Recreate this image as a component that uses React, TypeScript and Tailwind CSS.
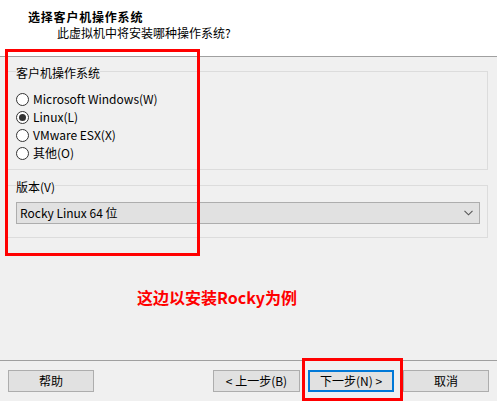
const options = [
  { label: 'Microsoft Windows(W)', checked: false },
  { label: 'Linux(L)', checked: true },
  { label: 'VMware ESX(X)', checked: false },
  { label: '其他(O)', checked: false },
]

function Radio({ checked }: { checked: boolean }) {
  return (
    <span className="w-[13px] h-[13px] rounded-full border border-[#333333] bg-white flex items-center justify-center shrink-0">
      {checked && <span className="w-[7px] h-[7px] rounded-full bg-[#333333]" />}
    </span>
  )
}

export default function App() {
  return (
    <div
      className="relative w-[497px] h-[401px] bg-[#f0f0f0] text-black text-[12px] flex flex-col overflow-hidden"
      style={{ fontFamily: '"Noto Sans CJK SC", "Noto Sans", sans-serif' }}
    >
      {/* Header */}
      <div className="h-[57px] bg-white border-b border-[#a0a0a0] shrink-0">
        <div className="pl-[28px] pt-[9px] leading-[16px] font-bold tracking-[0.8px]">选择客户机操作系统</div>
        <div className="pl-[57px] leading-[16px]">此虚拟机中将安装哪种操作系统?</div>
      </div>

      <div className="pl-[7px] pr-[9px]">
        {/* Guest OS group */}
        <fieldset className="mt-[4px] border border-[#dcdcdc] pl-[8px] pr-[7px] pt-[9px] pb-[7px]">
          <legend className="pt-[4px] leading-[16px]">客户机操作系统</legend>
          {options.map((o) => (
            <div key={o.label} className="h-[18px] flex items-center gap-[4px]">
              <Radio checked={o.checked} />
              <span className="leading-[16px]">{o.label}</span>
            </div>
          ))}
        </fieldset>

        {/* Version group */}
        <fieldset className="mt-[5px] border border-[#dcdcdc] pl-[8px] pr-[7px] pt-[7px] pb-[13px]">
          <legend className="pt-[4px] leading-[16px]">版本(V)</legend>
          <div className="h-[22px] bg-[#e1e1e1] border border-[#adadad] flex items-center pl-[3px] pr-[5px]">
            <span className="flex-1 leading-[16px]">Rocky Linux 64 位</span>
            <svg width="9" height="6" viewBox="0 0 9 6" className="mr-[1px]">
              <path d="M0.5 0.8 L4.5 4.8 L8.5 0.8" fill="none" stroke="#555555" strokeWidth="1.1" />
            </svg>
          </div>
        </fieldset>
      </div>

      {/* Annotation text */}
      <div className="pl-[137px] pt-[49px] text-[16px] font-bold text-[#ff0000] leading-[20px]">
        这边以安装Rocky为例
      </div>

      {/* Footer */}
      <div className="mt-auto border-t border-[#a0a0a0] h-[41px] pt-[9px] px-[8px] flex">
        <button className="w-[86px] h-[22px] bg-[#e1e1e1] border border-[#adadad] leading-[16px]">帮助</button>
        <div className="ml-auto flex">
          <button className="w-[87px] h-[22px] bg-[#e1e1e1] border border-[#adadad] leading-[16px]">&lt; 上一步(B)</button>
          <button className="ml-[8px] w-[86px] h-[22px] bg-[#e1e1e1] border-2 border-[#0078d7] leading-[16px]">下一步(N) &gt;</button>
          <button className="ml-[9px] w-[86px] h-[22px] bg-[#e1e1e1] border border-[#adadad] leading-[16px]">取消</button>
        </div>
      </div>

      {/* Red annotation boxes */}
      <div className="absolute left-[5px] top-[49px] w-[195px] h-[207px] border-[3px] border-[#ff0000] pointer-events-none" />
      <div className="absolute left-[302px] top-[358px] w-[101px] h-[43px] border-[3px] border-[#ff0000] pointer-events-none" />
    </div>
  )
}
